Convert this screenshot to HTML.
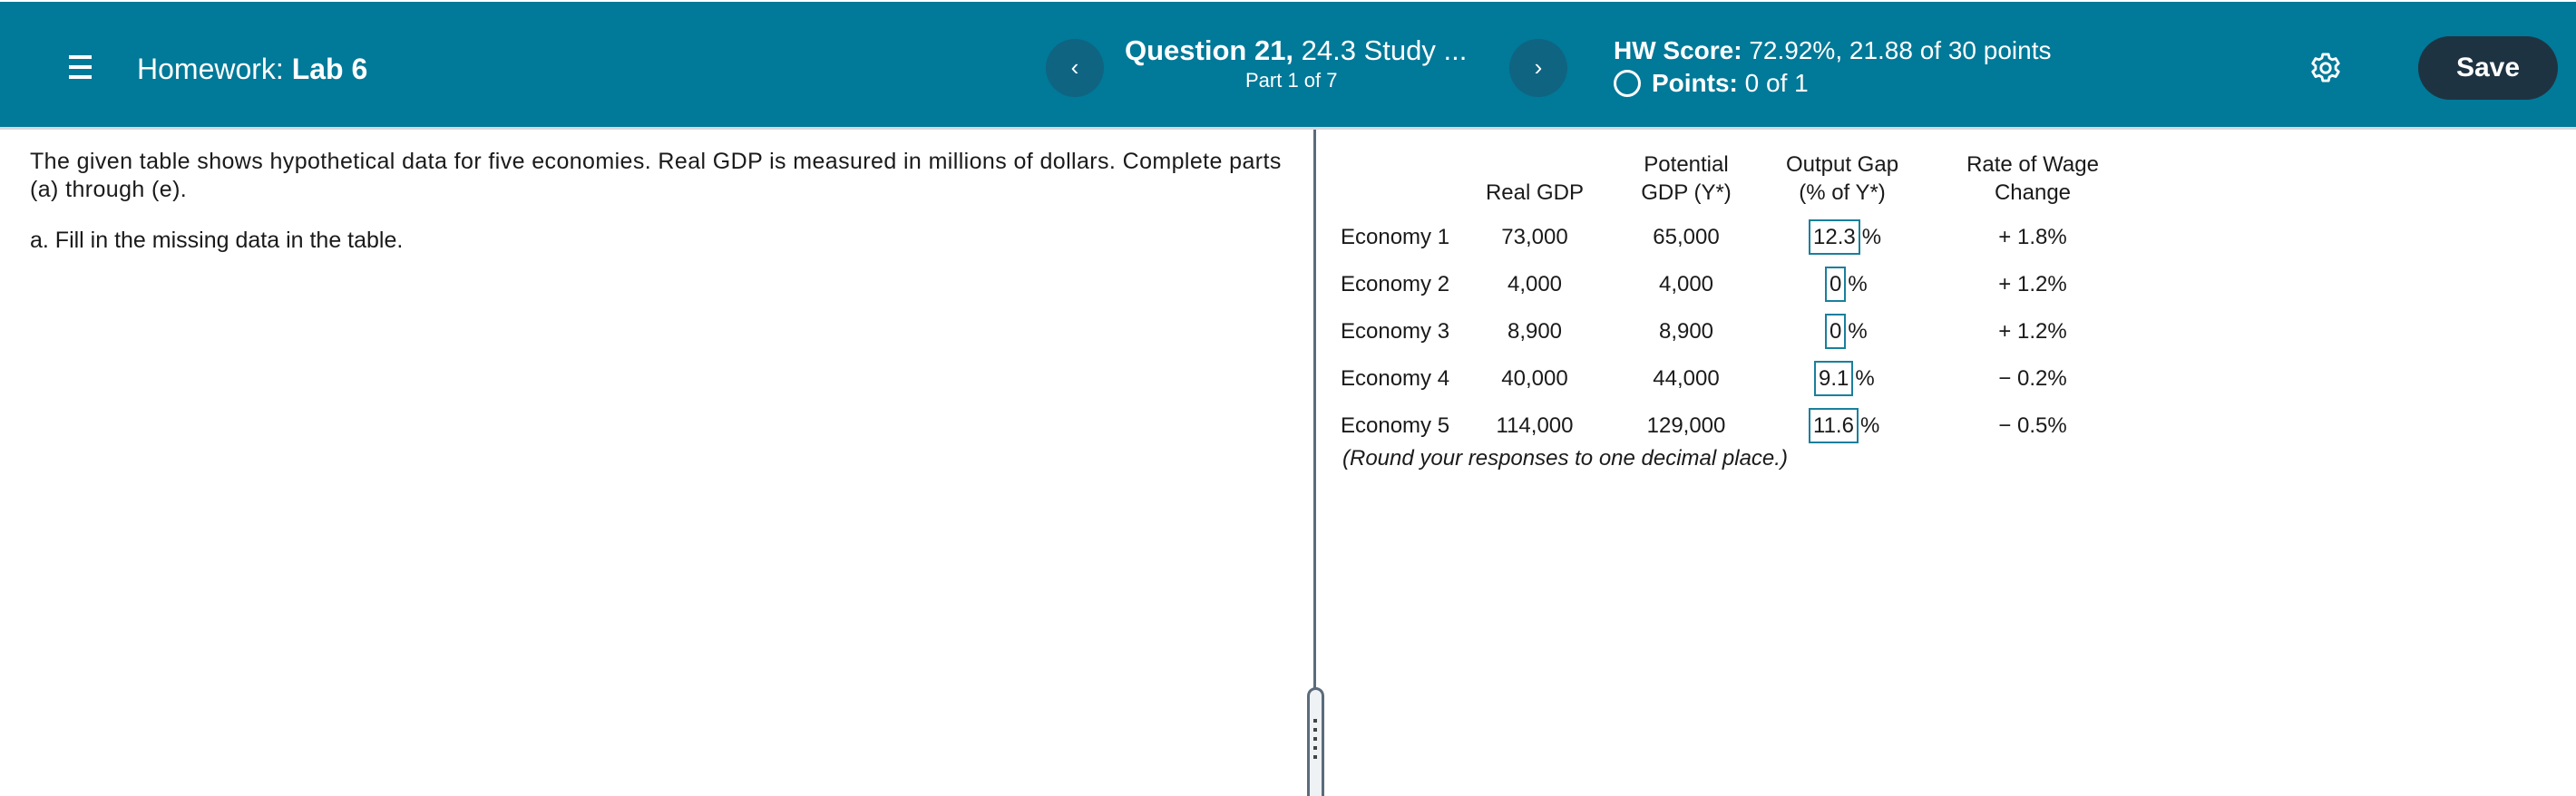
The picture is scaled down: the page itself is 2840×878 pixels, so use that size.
<!DOCTYPE html>
<html><head><meta charset="utf-8"><style>
*{margin:0;padding:0;box-sizing:border-box}
body{width:2840px;height:868px;background:#fff;position:relative;overflow:hidden;font-family:"Liberation Sans",Arial,sans-serif;color:#1a1a1a}
.hdr{position:absolute;left:0;top:2px;width:2840px;height:138px;background:#017998;color:#fff}
.strip{position:absolute;left:0;top:140px;width:2840px;height:3px;background:#d4d8dd}
.a{position:absolute;white-space:nowrap}
.circ{position:absolute;width:64px;height:64px;border-radius:50%;background:#0f6482;color:#fff;font-size:26px;text-align:center;line-height:62px}
.c{position:absolute;transform:translateX(-50%);text-align:center;white-space:nowrap;font-size:24px;line-height:31px}
.row{position:absolute;left:0;width:2840px;height:39px;font-size:24px;line-height:39px}
.row div{position:absolute;white-space:nowrap}
.row .m{transform:translateX(-50%)}
.box{display:inline-block;border:2px solid #1a7f9c;padding:0 3px;line-height:35px;margin-right:2px;vertical-align:top}
</style></head><body>
<div class="hdr">
  <div class="a" style="left:76px;top:59px;width:25px;height:4px;background:#fff"></div>
  <div class="a" style="left:76px;top:70px;width:25px;height:4px;background:#fff"></div>
  <div class="a" style="left:76px;top:81px;width:25px;height:4px;background:#fff"></div>
  <div class="a" style="left:151px;top:56px;font-size:32px">Homework: <b>Lab 6</b></div>
  <div class="circ" style="left:1153px;top:41px">&#8249;</div>
  <div class="a" style="left:1240px;top:36px;font-size:31px"><b>Question 21,</b> 24.3 Study ...</div>
  <div class="a" style="left:1373px;top:74px;font-size:22px">Part 1 of 7</div>
  <div class="circ" style="left:1664px;top:41px">&#8250;</div>
  <div class="a" style="left:1779px;top:38px;font-size:28px"><b>HW Score:</b> 72.92%, 21.88 of 30 points</div>
  <div class="a" style="left:1779px;top:75px;width:30px;height:30px;border:3px solid #fff;border-radius:50%"></div>
  <div class="a" style="left:1821px;top:74px;font-size:28px"><b>Points:</b> 0 of 1</div>
  <svg class="a" style="left:2545px;top:54px" width="38" height="38" viewBox="0 0 24 24" fill="none" stroke="#fff" stroke-width="1.8" stroke-linejoin="round"><path d="M10 2.5h4l.6 2.6 1.9 1.1 2.5-.8 2 3.4-2 1.8v2.2l2 1.8-2 3.4-2.5-.8-1.9 1.1-.6 2.6h-4l-.6-2.6-1.9-1.1-2.5.8-2-3.4 2-1.8v-2.2l-2-1.8 2-3.4 2.5.8 1.9-1.1z"/><circle cx="12" cy="12" r="3.3"/></svg>
  <div class="a" style="left:2666px;top:38px;width:154px;height:70px;border-radius:35px;background:#1e3342;font-size:30px;font-weight:bold;text-align:center;line-height:70px">Save</div>
</div>
<div class="strip"></div>
<div class="a" style="left:33px;top:163px;width:1400px;white-space:normal;font-size:25px;line-height:31px;letter-spacing:0.4px">The given table shows hypothetical data for five economies. Real GDP is measured in millions of dollars. Complete parts<br>(a) through (e).</div>
<div class="a" style="left:33px;top:251px;font-size:25px">a. Fill in the missing data in the table.</div>
<div class="a" style="left:1448px;top:143px;width:3px;height:620px;background:#5b6b7b"></div>
<div class="a" style="left:1441px;top:758px;width:19px;height:120px;border:3px solid #5b6b7b;border-bottom:none;border-radius:10px 10px 0 0;background:#eef2f5"></div>
<div class="a" style="left:1448px;top:793px;width:4px;height:4px;background:#444"></div>
<div class="a" style="left:1448px;top:803px;width:4px;height:4px;background:#444"></div>
<div class="a" style="left:1448px;top:813px;width:4px;height:4px;background:#444"></div>
<div class="a" style="left:1448px;top:823px;width:4px;height:4px;background:#444"></div>
<div class="a" style="left:1448px;top:833px;width:4px;height:4px;background:#444"></div>

<div class="c" style="left:1692px;top:197px">Real GDP</div>
<div class="c" style="left:1859px;top:166px">Potential<br>GDP (Y*)</div>
<div class="c" style="left:2031px;top:166px">Output Gap<br>(% of Y*)</div>
<div class="c" style="left:2241px;top:166px">Rate of Wage<br>Change</div>

<div class="row" style="top:242px"><div style="left:1478px">Economy 1</div><div class="m" style="left:1692px">73,000</div><div class="m" style="left:1859px">65,000</div><div style="left:1994px"><span class="box">12.3</span>%</div><div class="m" style="left:2241px">+ 1.8%</div></div>
<div class="row" style="top:294px"><div style="left:1478px">Economy 2</div><div class="m" style="left:1692px">4,000</div><div class="m" style="left:1859px">4,000</div><div style="left:2012px"><span class="box">0</span>%</div><div class="m" style="left:2241px">+ 1.2%</div></div>
<div class="row" style="top:346px"><div style="left:1478px">Economy 3</div><div class="m" style="left:1692px">8,900</div><div class="m" style="left:1859px">8,900</div><div style="left:2012px"><span class="box">0</span>%</div><div class="m" style="left:2241px">+ 1.2%</div></div>
<div class="row" style="top:398px"><div style="left:1478px">Economy 4</div><div class="m" style="left:1692px">40,000</div><div class="m" style="left:1859px">44,000</div><div style="left:2000px"><span class="box">9.1</span>%</div><div class="m" style="left:2241px">&#8722; 0.2%</div></div>
<div class="row" style="top:450px"><div style="left:1478px">Economy 5</div><div class="m" style="left:1692px">114,000</div><div class="m" style="left:1859px">129,000</div><div style="left:1994px"><span class="box">11.6</span>%</div><div class="m" style="left:2241px">&#8722; 0.5%</div></div>

<div class="a" style="left:1480px;top:492px;font-size:24px;font-style:italic">(Round your responses to one decimal place.)</div>
</body></html>
